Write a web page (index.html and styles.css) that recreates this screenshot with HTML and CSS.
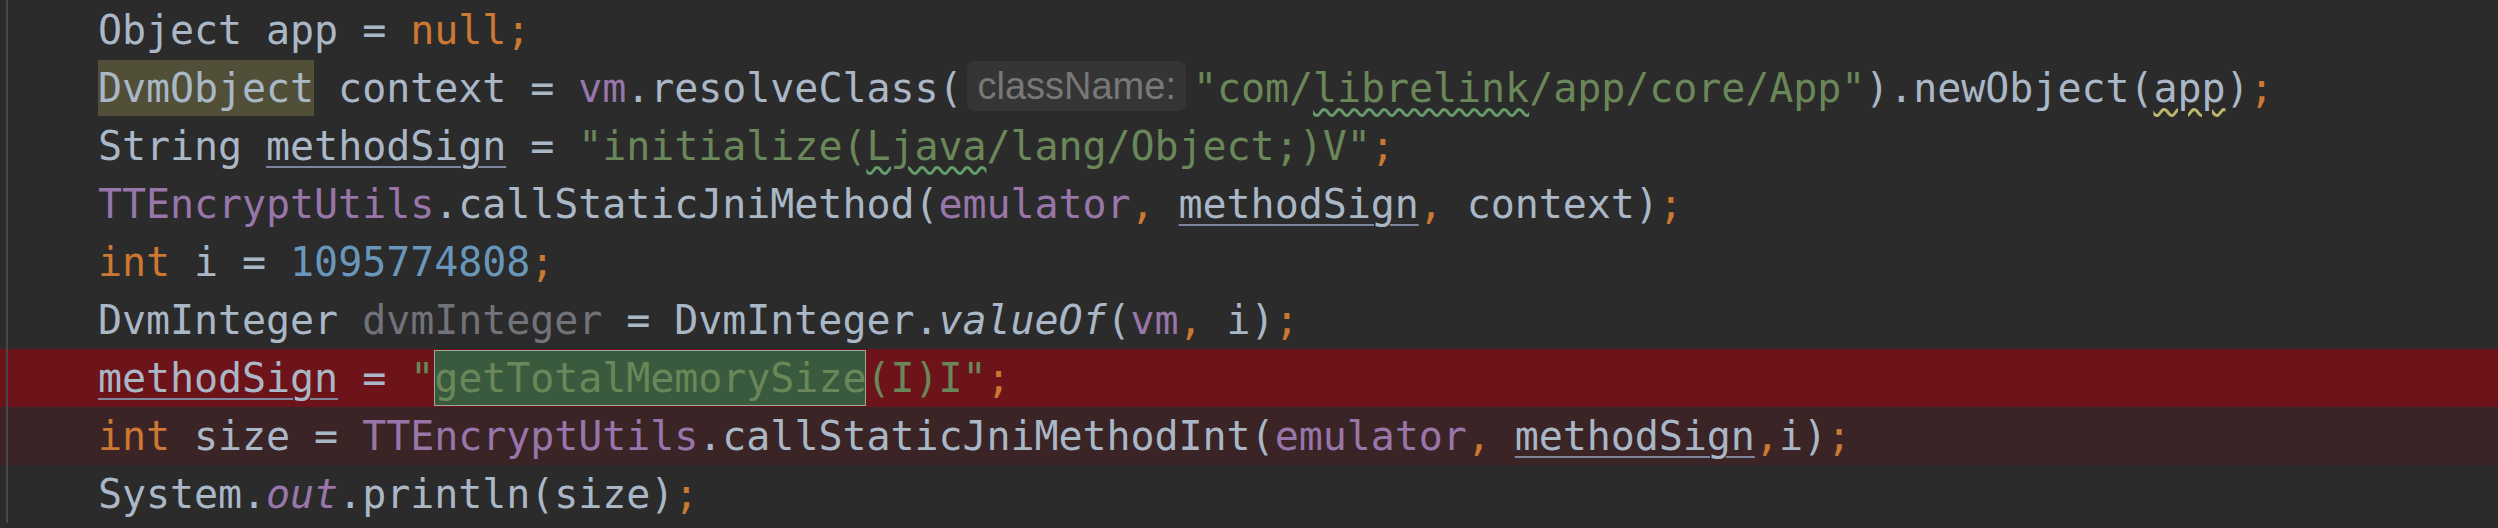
FILE: index.html
```html
<!DOCTYPE html>
<html lang="en">
<head>
<meta charset="utf-8">
<title>Editor</title>
<link rel="stylesheet" href="styles.css">
</head>
<body>
<div class="editor">
  <div class="line">Object app = <span class="kw">null</span><span class="kw">;</span></div>
  <div class="line"><span class="ident-hl">DvmObject</span> context = <span class="fld">vm</span>.resolveClass(<span class="hint">className:</span><span class="str">"com/<span class="typo">librelink</span>/app/core/App"</span>).newObject(<span class="warn">app</span>)<span class="kw">;</span></div>
  <div class="line">String <span class="reassign">methodSign</span> = <span class="str">"initialize(<span class="typo">Ljava</span>/lang/Object;)V"</span><span class="kw">;</span></div>
  <div class="line"><span class="fld">TTEncryptUtils</span>.callStaticJniMethod(<span class="fld">emulator</span><span class="kw">,</span> <span class="reassign">methodSign</span><span class="kw">,</span> context)<span class="kw">;</span></div>
  <div class="line"><span class="kw">int</span> i = <span class="num">1095774808</span><span class="kw">;</span></div>
  <div class="line">DvmInteger <span class="unused">dvmInteger</span> = DvmInteger.<span class="it">valueOf</span>(<span class="fld">vm</span><span class="kw">,</span> i)<span class="kw">;</span></div>
  <div class="line line-bp"><span class="reassign">methodSign</span> = <span class="str">"<span class="sel">getTotalMemorySize</span>(I)I"</span><span class="kw">;</span></div>
  <div class="line line-exec"><span class="kw">int</span> size = <span class="fld">TTEncryptUtils</span>.callStaticJniMethodInt(<span class="fld">emulator</span><span class="kw">,</span> <span class="reassign">methodSign</span><span class="kw">,</span>i)<span class="kw">;</span></div>
  <div class="line">System.<span class="fld it">out</span>.println(size)<span class="kw">;</span></div>
</div>
</body>
</html>
```

FILE: styles.css
```css
html, body {
  margin: 0;
  padding: 0;
  background: #2b2b2b;
  width: 2498px;
  height: 528px;
  overflow: hidden;
}

.editor {
  position: relative;
  padding-top: 1px;
  font-family: "DejaVu Sans Mono", monospace;
  font-size: 40px;
  letter-spacing: -0.07px;
  color: #a9b7c6;
}

.editor::before {
  content: "";
  position: absolute;
  left: 6px;
  top: 0;
  bottom: 0;
  width: 2px;
  background: #474747;
  z-index: 2;
}

.line {
  height: 58px;
  line-height: 58px;
  padding-left: 98px;
  white-space: pre;
}

.line-bp {
  background: #6d141a;
}

.line-exec {
  background: #3b2426;
}

.kw { color: #cc7832; }
.str { color: #6a8759; }
.num { color: #6897bb; }
.fld { color: #9876aa; }
.unused { color: #72737a; }
.it { font-style: italic; }

.reassign {
  text-decoration: underline;
  text-decoration-color: #7d869c;
  text-decoration-thickness: 2px;
  text-underline-offset: 6px;
}

.typo {
  text-decoration: underline wavy #659c6b;
  text-decoration-thickness: 2.5px;
  text-underline-offset: 6px;
}

.warn {
  text-decoration: underline wavy #bdb76b;
  text-decoration-thickness: 2.5px;
  text-underline-offset: 6px;
}

.ident-hl {
  background: #524f38;
  padding: 5px 0;
}

.sel {
  background: #3a5a3e;
  padding: 5px 0;
  box-shadow: inset 0 0 0 1px #9aa79a;
}

.hint {
  display: inline-block;
  font-family: "Liberation Sans", Arial, sans-serif;
  font-size: 38px;
  letter-spacing: 0;
  line-height: 50px;
  height: 50px;
  padding: 0 10px;
  margin: 0 7px 0 5px;
  border-radius: 8px;
  background: #353535;
  color: #787878;
  vertical-align: 3px;
}
```
